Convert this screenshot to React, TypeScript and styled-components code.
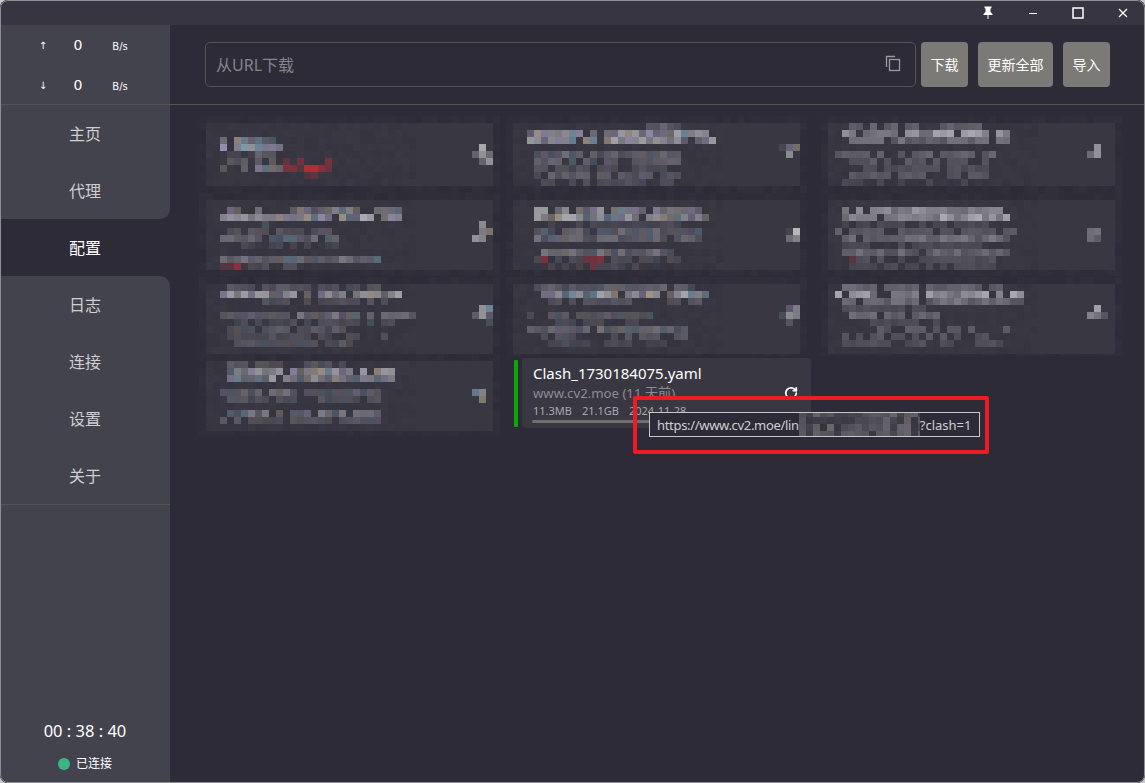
import React from "react";
import styled, { createGlobalStyle } from "styled-components";
import { RotateCw } from "lucide-react";

const GlobalStyle = createGlobalStyle`
    html, body {
        margin: 0;
        height: 100%;
        background: #c9c9c9;
    }
    body {
        font-family: "Noto Sans", "Noto Sans CJK SC", sans-serif;
    }
    #root {
        height: 100%;
    }
`;

const colors = {
    main: "#2d2b37",
    side: "#43434e",
    title: "#363541",
    card: "#393742",
    line: "#57534f",
    button: "#7b7a76",
};

const Window = styled.div`
    position: relative;
    display: flex;
    flex-direction: column;
    height: 783px;
    border-radius: 8px;
    overflow: hidden;
    background: ${colors.main};
    &::after {
        content: "";
        position: absolute;
        inset: 0;
        border: 1px solid #8f8f93;
        border-radius: 8px;
        pointer-events: none;
    }
`;

const TitleBar = styled.div`
    display: flex;
    justify-content: flex-end;
    height: 25px;
    background: ${colors.title};
`;

const TitleButton = styled.div`
    display: flex;
    align-items: center;
    justify-content: center;
    width: 45px;
    height: 25px;
    color: #fff;
`;

const Body = styled.div`
    display: flex;
    flex: 1;
    min-height: 0;
`;

const Sidebar = styled.aside`
    display: flex;
    flex-direction: column;
    flex: 0 0 170px;
`;

const Traffic = styled.div`
    box-sizing: border-box;
    height: 80px;
    background: ${colors.side};
    border-bottom: 1px solid ${colors.line};
`;

const TrafficRow = styled.div`
    display: grid;
    grid-template-columns: 34px 36px 48px;
    align-items: center;
    height: 40px;
    padding-left: 26px;
    color: #fff;
    text-align: center;
`;

const TrafficValue = styled.span<{ $size: number }>`
    font-size: ${({ $size }) => $size}px;
    font-family: "DejaVu Sans", sans-serif;
`;

const TrafficUnit = styled.span`
    padding-top: 2px;
    font-size: 10px;
    font-family: "DejaVu Sans", sans-serif;
`;

const NavItem = styled.div<{ $active?: boolean; $before?: boolean; $after?: boolean }>`
    box-sizing: border-box;
    display: flex;
    align-items: center;
    justify-content: center;
    height: 57px;
    padding-bottom: 2px;
    font-size: 16px;
    color: ${({ $active }) => ($active ? "#fff" : "#cfcfcf")};
    background: ${({ $active }) => ($active ? "transparent" : colors.side)};
    border-bottom-right-radius: ${({ $before }) => ($before ? "10px" : "0")};
    border-top-right-radius: ${({ $after }) => ($after ? "10px" : "0")};
`;

const SideFoot = styled.div`
    display: flex;
    flex-direction: column;
    align-items: center;
    justify-content: flex-end;
    flex: 1;
    padding-bottom: 8px;
    background: ${colors.side};
    border-top: 1px solid ${colors.line};
    color: #fff;
`;

const Clock = styled.div`
    font-size: 16.5px;
    line-height: 22px;
    margin-bottom: 11px;
`;

const Status = styled.div`
    display: flex;
    align-items: center;
    gap: 6px;
    font-size: 12px;
    line-height: 22px;
`;

const StatusDot = styled.span`
    width: 12px;
    height: 12px;
    border-radius: 50%;
    background: #3cb580;
`;

const Main = styled.main`
    flex: 1;
    min-width: 0;
`;

const Toolbar = styled.div`
    box-sizing: border-box;
    display: flex;
    align-items: center;
    gap: 10px;
    height: 80px;
    padding: 0 35px;
    border-bottom: 1px solid ${colors.line};
`;

const UrlField = styled.div`
    box-sizing: border-box;
    display: flex;
    align-items: center;
    justify-content: space-between;
    width: 711px;
    height: 45px;
    margin-right: -5px;
    padding: 0 14px 2px 10px;
    border: 1px solid ${colors.line};
    border-radius: 5px;
    font-size: 16px;
    color: #85848a;
`;

const ActionButton = styled.div<{ $width: number }>`
    box-sizing: border-box;
    display: flex;
    align-items: center;
    justify-content: center;
    width: ${({ $width }) => $width}px;
    height: 45px;
    padding-bottom: 2px;
    border-radius: 4px;
    background: ${colors.button};
    color: #fff;
    font-size: 14px;
`;

const ProfileGrid = styled.div`
    display: grid;
    grid-template-columns: repeat(3, 297px);
    grid-auto-rows: 70px;
    column-gap: 11px;
    row-gap: 10px;
    padding: 13px 0 0 36px;
`;

const ProfileSlot = styled.div`
    position: relative;
    display: flex;
    gap: 4px;
`;

const MosaicLayer = styled.svg`
    position: absolute;
    left: -8px;
    top: -8px;
    display: block;
`;

const ActiveBar = styled.div`
    flex: 0 0 4px;
    margin: 2px 0 1px;
    background: #0ca60c;
    border-radius: 1px;
`;

const ProfileCard = styled.div`
    box-sizing: border-box;
    flex: 1;
    padding: 5px 0 0 11px;
    background: ${colors.card};
    border-radius: 4px;
`;

const ProfileName = styled.div`
    font-size: 15px;
    line-height: 20px;
    color: #fff;
`;

const ProfileHost = styled.div`
    display: flex;
    align-items: center;
    justify-content: space-between;
    padding-right: 13px;
    font-size: 13.2px;
    line-height: 20px;
    color: #8d8c93;
`;

const ProfileMeta = styled.div`
    display: flex;
    gap: 10px;
    font-size: 11px;
    line-height: 16px;
    color: #a9a8ad;
`;

const Usage = styled.div`
    height: 3px;
    margin: 1px 10px 0 -1px;
    border-radius: 2px;
    background: #6f6e6c;
`;

const Tooltip = styled.div`
    position: absolute;
    left: 135px;
    top: 54px;
    box-sizing: border-box;
    display: flex;
    align-items: center;
    height: 25px;
    width: 331px;
    padding: 0 7px;
    background: ${colors.main};
    border: 1px solid #c6c6c6;
    font-size: 13px;
    color: #cfcfcf;
    white-space: nowrap;
`;

const TooltipUrl = styled.span`
    letter-spacing: -0.32px;
`;

const TooltipBlur = styled.svg`
    flex: 0 0 121px;
    display: block;
`;

const Annotation = styled.div`
    position: absolute;
    left: 119px;
    top: 38px;
    box-sizing: border-box;
    width: 356px;
    height: 58px;
    border: 4px solid #ed1c24;
    border-radius: 2px;
`;

type Line = [number, number, number, number];

interface BlurCard {
    x0: number;
    rows: [number, number];
    tint: boolean;
    lines: Line[];
    red?: [number, number, number][];
    icon: [number, number, number][];
}

const CELL = 7;
const GRID_TOP = 116;

const rng = (seed: number) => () => {
    seed = (seed + 0x6d2b79f5) | 0;
    let t = Math.imul(seed ^ (seed >>> 15), 1 | seed);
    t = (t + Math.imul(t ^ (t >>> 7), 61 | t)) ^ t;
    return ((t ^ (t >>> 14)) >>> 0) / 4294967296;
};

const mix = (a: number[], b: number[], k: number) =>
    `rgb(${a.map((v, i) => Math.round(v + (b[i] - v) * k)).join(",")})`;

const CARD_RGB = [57, 55, 66];
const DARK_RGB = [45, 43, 55];
const tints = [
    [205, 205, 210],
    [205, 205, 210],
    [205, 205, 210],
    [130, 165, 185],
    [190, 175, 155],
    [175, 165, 200],
];

const blurCards: BlurCard[] = [
    {
        x0: 199, rows: [1, 9], tint: true,
        lines: [[3, 3, 7, 0.6], [3, 8, 10, 0.4], [4, 3, 11, 0.7], [5, 4, 7, 0.12], [5, 8, 10, 0.25], [6, 4, 7, 0.2], [6, 8, 10, 0.25], [7, 3, 11, 0.45]],
        red: [[6, 12, 0.3], [6, 14, 0.4], [6, 18, 0.45], [7, 12, 0.5], [7, 13, 0.5], [7, 14, 0.2], [7, 15, 0.9], [7, 16, 0.9], [7, 17, 0.6], [7, 18, 0.4], [8, 15, 0.15], [8, 16, 0.3]],
        icon: [[4, 40, 0.75], [5, 39, 0.3], [5, 40, 0.6], [5, 41, 0.35], [6, 40, 0.3], [6, 41, 0.6]],
    },
    {
        x0: 506, rows: [1, 9], tint: true,
        lines: [[1, 20, 24, 0.25], [2, 3, 28, 0.55], [3, 3, 29, 0.55], [5, 4, 24, 0.3], [6, 4, 24, 0.25], [7, 4, 24, 0.15], [8, 4, 24, 0.25], [9, 4, 24, 0.15]],
        icon: [[4, 39, 0.1], [4, 40, 0.4], [4, 41, 0.45], [5, 40, 0.55]],
    },
    {
        x0: 821, rows: [1, 9], tint: false,
        lines: [[1, 4, 22, 0.25], [2, 2, 26, 0.6], [3, 4, 26, 0.35], [5, 2, 24, 0.25], [6, 2, 23, 0.2], [7, 4, 23, 0.15], [8, 4, 23, 0.2], [9, 3, 20, 0.1]],
        icon: [[4, 39, 0.6], [5, 38, 0.35], [5, 39, 0.6]],
    },
    {
        x0: 199, rows: [12, 21], tint: true,
        lines: [[13, 4, 5, 0.5], [13, 8, 8, 0.45], [13, 12, 28, 0.4], [14, 3, 28, 0.6], [15, 9, 9, 0.2], [16, 4, 19, 0.2], [17, 3, 19, 0.35], [18, 4, 19, 0.12], [20, 3, 25, 0.35], [21, 3, 14, 0.15]],
        red: [[21, 3, 0.2], [21, 4, 0.2], [21, 5, 0.6]],
        icon: [[15, 40, 0.55], [16, 40, 0.45], [16, 41, 0.5], [17, 39, 0.6], [17, 40, 0.5]],
    },
    {
        x0: 506, rows: [12, 21], tint: true,
        lines: [[13, 4, 28, 0.5], [14, 4, 28, 0.6], [15, 6, 24, 0.12], [16, 4, 27, 0.3], [17, 4, 27, 0.3], [19, 4, 25, 0.35], [20, 4, 25, 0.15], [21, 6, 18, 0.1]],
        red: [[20, 5, 0.5], [20, 11, 0.35], [20, 12, 0.4], [20, 13, 0.5], [21, 12, 0.4]],
        icon: [[16, 40, 0.1], [16, 41, 0.85], [17, 40, 0.35], [17, 41, 0.5]],
    },
    {
        x0: 821, rows: [12, 21], tint: false,
        lines: [[13, 3, 26, 0.5], [14, 3, 26, 0.6], [15, 3, 23, 0.12], [16, 2, 28, 0.22], [17, 3, 26, 0.35], [18, 3, 22, 0.12], [19, 3, 26, 0.3], [20, 3, 24, 0.15], [21, 4, 24, 0.12]],
        red: [[20, 4, 0.25]],
        icon: [[16, 38, 0.35], [16, 39, 0.4], [17, 38, 0.35], [17, 39, 0.25]],
    },
    {
        x0: 199, rows: [24, 33], tint: true,
        lines: [[24, 4, 25, 0.2], [25, 3, 28, 0.55], [26, 9, 26, 0.15], [28, 3, 30, 0.35], [29, 5, 29, 0.15], [30, 4, 20, 0.2], [31, 4, 26, 0.15], [32, 4, 26, 0.2]],
        icon: [[27, 40, 0.6], [27, 41, 0.7], [28, 39, 0.25], [28, 40, 0.6], [28, 41, 0.3], [29, 41, 0.2]],
    },
    {
        x0: 506, rows: [24, 33], tint: true,
        lines: [[24, 4, 27, 0.3], [25, 5, 28, 0.6], [26, 6, 27, 0.18], [28, 3, 20, 0.22], [29, 4, 18, 0.15], [30, 3, 25, 0.3], [31, 4, 25, 0.2], [32, 6, 25, 0.12]],
        icon: [[27, 40, 0.3], [27, 41, 0.45], [28, 39, 0.2], [28, 40, 0.55], [28, 41, 0.45], [29, 40, 0.2]],
    },
    {
        x0: 821, rows: [24, 33], tint: false,
        lines: [[24, 3, 26, 0.28], [25, 2, 28, 0.6], [26, 3, 28, 0.35], [27, 3, 14, 0.15], [28, 3, 16, 0.3], [29, 7, 16, 0.12], [30, 5, 26, 0.2], [31, 2, 24, 0.18], [32, 3, 25, 0.15]],
        icon: [[27, 39, 0.7], [28, 38, 0.5], [28, 39, 0.4], [28, 40, 0.2]],
    },
    {
        x0: 199, rows: [35, 44], tint: true,
        lines: [[35, 4, 20, 0.2], [36, 4, 27, 0.55], [37, 4, 27, 0.5], [39, 3, 25, 0.3], [40, 3, 25, 0.18], [42, 3, 25, 0.35], [43, 3, 25, 0.2]],
        icon: [[39, 39, 0.6], [39, 40, 0.5], [40, 40, 0.55]],
    },
];

const SLOT_W = 297;
const SLOT_H = 70;
const PAD = 8;

// every card is blurred on the shared 7px grid, so rects are written in page coordinates
const BlurredProfile = ({ card, index }: { card: BlurCard; index: number }) => {
    const slotX = 206 + 308 * (index % 3);
    const slotY = 118 + 80 * Math.floor(index / 3);
    const random = rng(index * 97 + 11);
    const cells: Record<string, string> = {};
    const [top, bottom] = card.rows;
    const lastCol = 42;

    for (let r = top - 1; r <= bottom + 1; r++) {
        for (let c = 0; c <= lastCol; c++) {
            const edge = r < top || r > bottom || c < 1 || c >= lastCol;
            const noise = random();
            if (edge) {
                cells[`${r}:${c}`] = mix(DARK_RGB, CARD_RGB, noise * 0.4);
            } else if (c < 31) {
                cells[`${r}:${c}`] = mix(DARK_RGB, CARD_RGB, 0.7 + noise * 0.4);
            } else {
                cells[`${r}:${c}`] = colors.card;
            }
        }
    }

    const paint = (r: number, c: number, level: number) => {
        const target = card.tint ? tints[Math.floor(random() * tints.length)] : tints[0];
        cells[`${r}:${c}`] = mix(CARD_RGB, target, level);
    };

    card.lines.forEach(([r, from, to, level]) => {
        for (let c = from; c <= to; c++) {
            const pick = random();
            if (pick < (level < 0.3 ? 0.3 : 0.1)) continue;
            paint(r, c, level * (0.45 + pick * 0.85));
        }
    });
    card.icon.forEach(([r, c, level]) => paint(r, c, level));
    (card.red || []).forEach(([r, c, level]) => {
        cells[`${r}:${c}`] = mix(CARD_RGB, [190, 45, 55], level);
    });

    const width = SLOT_W + PAD * 2;
    const height = SLOT_H + PAD * 2;
    return (
        <MosaicLayer
            width={width}
            height={height}
            viewBox={`${slotX - PAD} ${slotY - PAD} ${width} ${height}`}
            shapeRendering="crispEdges"
        >
            {Object.entries(cells).map(([key, fill]) => {
                const [r, c] = key.split(":").map(Number);
                return (
                    <rect
                        key={key}
                        x={card.x0 + c * CELL}
                        y={GRID_TOP + r * CELL}
                        width={CELL}
                        height={CELL}
                        fill={fill}
                    />
                );
            })}
        </MosaicLayer>
    );
};

const UrlBlur = () => {
    const random = rng(4242);
    const rects = [];
    for (let r = 0; r < 4; r++) {
        for (let c = 0; c < 18; c++) {
            const k = 0.05 + random() * 0.35;
            rects.push(
                <rect
                    key={`${r}-${c}`}
                    x={c * CELL}
                    y={r * CELL - 3}
                    width={CELL}
                    height={CELL}
                    fill={mix(DARK_RGB, [190, 190, 185], k)}
                />
            );
        }
    }
    return (
        <TooltipBlur width="121" height="23" viewBox="0 0 121 23" shapeRendering="crispEdges">
            {rects}
        </TooltipBlur>
    );
};

const PinIcon = () => (
    <svg width="12" height="13" viewBox="0 0 12 13" fill="currentColor">
        <path d="M2.5 0.5h7v1.5l-1 0.5v3.5l2 2v1h-4v4h-1v-4h-4v-1l2-2V2.500l-1-0.5z" />
    </svg>
);

const MinIcon = () => (
    <svg width="12" height="12" viewBox="0 0 12 12">
        <path d="M2 6.500h8" stroke="currentColor" strokeWidth="1" />
    </svg>
);

const MaxIcon = () => (
    <svg width="12" height="12" viewBox="0 0 12 12" fill="none">
        <rect x="1" y="1" width="10" height="10" stroke="currentColor" strokeWidth="1.500" />
    </svg>
);

const CloseIcon = () => (
    <svg width="12" height="12" viewBox="0 0 12 12">
        <path d="M2 2l8 8M10 2l-8 8" stroke="currentColor" strokeWidth="1.300" />
    </svg>
);

const CopyIcon = () => (
    <svg width="17" height="17" viewBox="0 0 17 17" fill="none" stroke="#9b9aa0" strokeWidth="1.300">
        <path d="M11 1.500H2.500V12" />
        <rect x="5.500" y="4.500" width="10" height="11" />
    </svg>
);

const navItems = ["主页", "代理", "配置", "日志", "连接", "设置", "关于"];
const activeNav = 2;

const App = () => (
    <>
        <GlobalStyle />
        <Window>
            <TitleBar>
                <TitleButton><PinIcon /></TitleButton>
                <TitleButton><MinIcon /></TitleButton>
                <TitleButton><MaxIcon /></TitleButton>
                <TitleButton><CloseIcon /></TitleButton>
            </TitleBar>
            <Body>
                <Sidebar>
                    <Traffic>
                        <TrafficRow>
                            <TrafficValue $size={10}>↑</TrafficValue>
                            <TrafficValue $size={14}>0</TrafficValue>
                            <TrafficUnit>B/s</TrafficUnit>
                        </TrafficRow>
                        <TrafficRow>
                            <TrafficValue $size={10}>↓</TrafficValue>
                            <TrafficValue $size={14}>0</TrafficValue>
                            <TrafficUnit>B/s</TrafficUnit>
                        </TrafficRow>
                    </Traffic>
                    {navItems.map((label, i) => (
                        <NavItem
                            key={label}
                            $active={i === activeNav}
                            $before={i === activeNav - 1}
                            $after={i === activeNav + 1}
                        >
                            {label}
                        </NavItem>
                    ))}
                    <SideFoot>
                        <Clock>00 : 38 : 40</Clock>
                        <Status>
                            <StatusDot />
                            已连接
                        </Status>
                    </SideFoot>
                </Sidebar>
                <Main>
                    <Toolbar>
                        <UrlField>
                            从URL下载
                            <CopyIcon />
                        </UrlField>
                        <ActionButton $width={47}>下载</ActionButton>
                        <ActionButton $width={75}>更新全部</ActionButton>
                        <ActionButton $width={47}>导入</ActionButton>
                    </Toolbar>
                    <ProfileGrid>
                        {blurCards.map((card, i) => (
                            <ProfileSlot key={i}>
                                <BlurredProfile card={card} index={i} />
                            </ProfileSlot>
                        ))}
                        <ProfileSlot>
                            <ActiveBar />
                            <ProfileCard>
                                <ProfileName>Clash_1730184075.yaml</ProfileName>
                                <ProfileHost>
                                    www.cv2.moe (11 天前)
                                    <RotateCw size={14} strokeWidth={3} color="#fff" />
                                </ProfileHost>
                                <ProfileMeta>
                                    <span>11.3MB</span>
                                    <span>21.1GB</span>
                                    <span>2024-11-28</span>
                                </ProfileMeta>
                                <Usage />
                            </ProfileCard>
                            <Tooltip>
                                <TooltipUrl>https://www.cv2.moe/lin</TooltipUrl>
                                <UrlBlur />
                                ?clash=1
                            </Tooltip>
                            <Annotation />
                        </ProfileSlot>
                    </ProfileGrid>
                </Main>
            </Body>
        </Window>
    </>
);

export default App;
